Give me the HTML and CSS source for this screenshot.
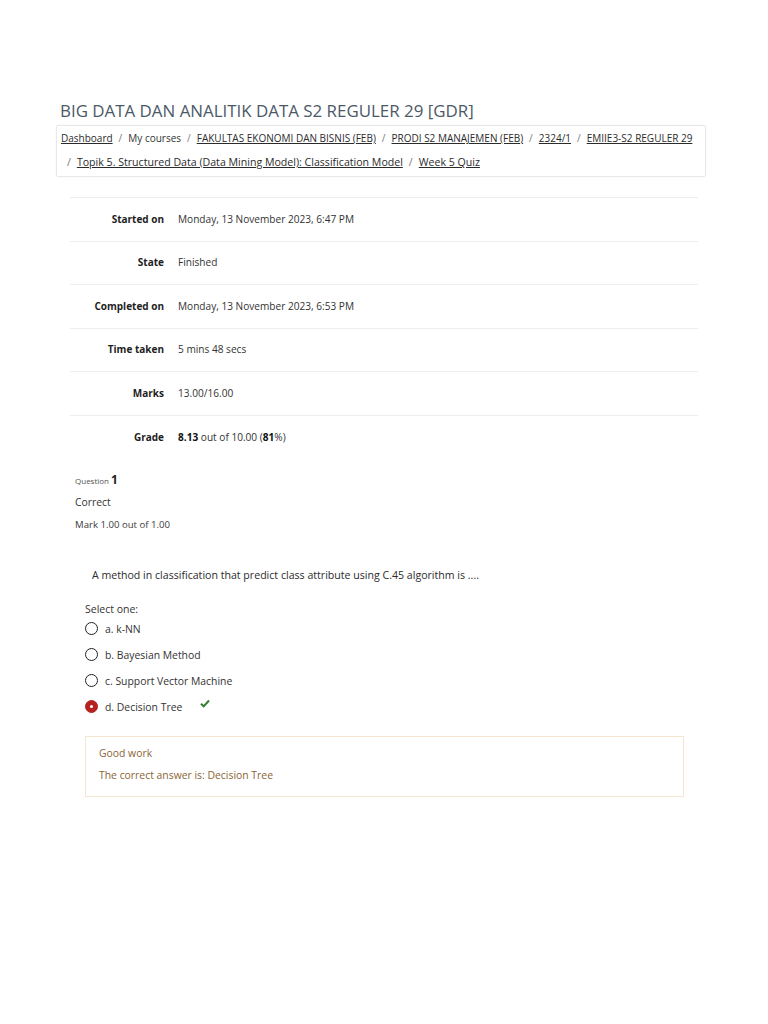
FILE: index.html
```html
<!DOCTYPE html>
<html>
<head>
<meta charset="utf-8">
<link rel="stylesheet" href="styles.css">
</head>
<body>
<div class="page">
  <h1 class="title">BIG DATA DAN ANALITIK DATA S2 REGULER 29 [GDR]</h1>
  <nav class="crumbs">
    <div class="crumb-line"><a href="#">Dashboard</a><span class="sep">/</span><span>My courses</span><span class="sep">/</span><a href="#">FAKULTAS EKONOMI DAN BISNIS (FEB)</a><span class="sep">/</span><a href="#">PRODI S2 MANAJEMEN (FEB)</a><span class="sep">/</span><a href="#">2324/1</a><span class="sep">/</span><a href="#">EMIIE3-S2 REGULER 29</a></div>
    <div class="crumb-line second"><span class="sep first">/</span><a href="#">Topik 5. Structured Data (Data Mining Model): Classification Model</a><span class="sep">/</span><a href="#">Week 5 Quiz</a></div>
  </nav>

  <table class="summary">
    <tr><th>Started on</th><td>Monday, 13 November 2023, 6:47 PM</td></tr>
    <tr><th>State</th><td>Finished</td></tr>
    <tr><th>Completed on</th><td>Monday, 13 November 2023, 6:53 PM</td></tr>
    <tr><th>Time taken</th><td>5 mins 48 secs</td></tr>
    <tr><th>Marks</th><td>13.00/16.00</td></tr>
    <tr><th>Grade</th><td><b>8.13</b> out of 10.00 (<b>81</b>%)</td></tr>
  </table>

  <div class="question">
    <div class="qno">Question <b>1</b></div>
    <div class="qstate">Correct</div>
    <div class="qmark">Mark 1.00 out of 1.00</div>
    <p class="qtext">A method in classification that predict class attribute using C.45 algorithm is ....</p>
    <div class="answers">
      <div class="prompt">Select one:</div>
      <div class="opt"><span class="radio"></span>a. k-NN</div>
      <div class="opt"><span class="radio"></span>b. Bayesian Method</div>
      <div class="opt"><span class="radio"></span>c. Support Vector Machine</div>
      <div class="opt"><span class="radio checked"></span>d. Decision Tree
        <svg class="tick" width="10" height="9" viewBox="0 0 10 9"><path d="M1 4.8 L3.7 7.3 L9 1.5" fill="none" stroke="#2e7d32" stroke-width="2"/></svg>
      </div>
    </div>
    <div class="feedback">
      <div>Good work</div>
      <div>The correct answer is: Decision Tree</div>
    </div>
  </div>
</div>
</body>
</html>
```

FILE: styles.css
```css
html, body {
  margin: 0;
  padding: 0;
  background: #fff;
}
body {
  font-family: "Open Sans", "Noto Sans", sans-serif;
  color: #2b2b2b;
  font-size: 10px;
}
.page {
  padding: 99px 62px 0 56px;
}
.title {
  margin: 0 0 2px 4px;
  font-weight: 400;
  font-size: 16.9px;
  color: #4b5866;
  line-height: 24px;
}
.crumbs {
  border: 1px solid #e6e8ea;
  border-radius: 2px;
  box-shadow: 0 0 2px rgba(0,0,0,0.06);
  padding: 0 4px 2px 4px;
  line-height: 24px;
  font-size: 10px;
  color: #333;
}
.crumb-line {
  white-space: nowrap;
}
.crumb-line.second {
  font-size: 10.6px;
}
.crumbs a {
  color: #2b2b2b;
  text-decoration: underline;
  text-underline-offset: 1px;
}
.crumbs .sep {
  color: #777;
  margin: 0 6px;
}
.crumbs .sep.first {
  margin-left: 6px;
}
.summary {
  margin: 20px 8px 0 14px;
  width: 628px;
  border-collapse: collapse;
}
.summary tr {
  border-top: 1px solid #eeeeee;
  height: 43.5px;
}
.summary th {
  width: 94px;
  text-align: right;
  font-weight: 700;
  padding: 0 14px 1px 0;
  color: #1e1e1e;
  font-size: 10px;
}
.summary td {
  padding: 0 0 1px;
  color: #333;
  font-size: 10.1px;
}
.summary b { color: #111; }
.question {
  margin: 15px 0 0 19px;
}
.qno {
  font-size: 8px;
  color: #555;
  line-height: 12px;
}
.qno b {
  font-size: 12px;
  color: #222;
}
.qstate {
  margin-top: 8px;
  font-size: 10.4px;
  line-height: 14px;
  color: #333;
}
.qmark {
  margin-top: 9px;
  font-size: 9.6px;
  line-height: 14px;
  color: #3a3a3a;
}
.qtext {
  margin: 36px 0 0 17px;
  font-size: 10.6px;
  line-height: 14px;
  color: #2b2b2b;
}
.answers {
  margin: 20px 0 0 10px;
}
.prompt {
  line-height: 14px;
  margin-bottom: 0;
  font-size: 10.5px;
  color: #333;
}
.opt {
  display: flex;
  align-items: center;
  height: 26px;
  font-size: 10.4px;
  color: #333;
}
.radio {
  width: 11px;
  height: 11px;
  border: 1.6px solid #222;
  border-radius: 50%;
  margin-right: 7px;
  flex: none;
}
.radio.checked {
  background: #b3231f;
  border-color: #b3231f;
  position: relative;
}
.radio.checked::after {
  content: "";
  position: absolute;
  left: 3.7px;
  top: 3.7px;
  width: 3.6px;
  height: 3.6px;
  border-radius: 50%;
  background: #fff;
}
.tick {
  margin-left: 18px;
  margin-top: -6px;
}
.feedback {
  margin: 16px 22px 0 10px;
  border: 1px solid #f5e6cf;
  padding: 5px 13px 10px;
  color: #8a6534;
  font-size: 10.4px;
  line-height: 22px;
}
```
